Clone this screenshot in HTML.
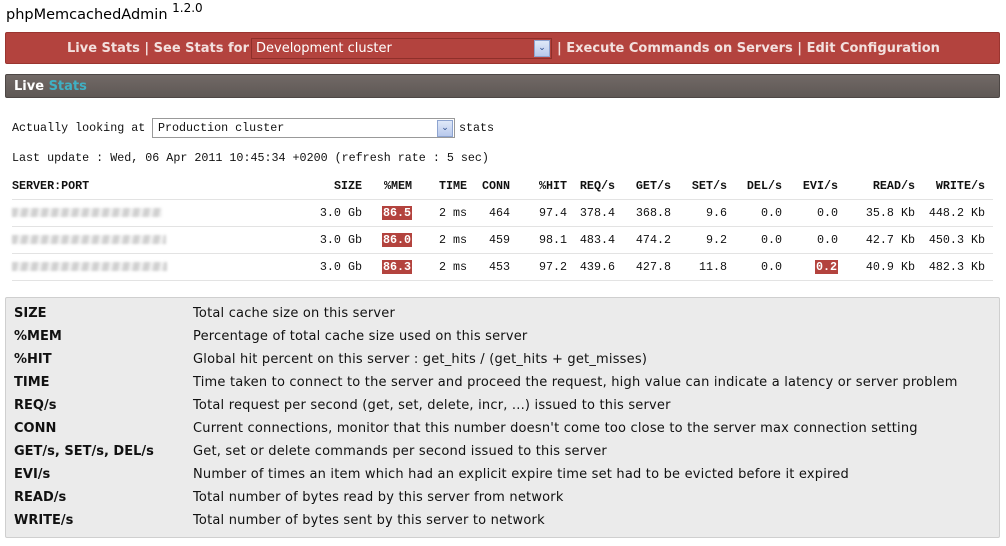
<!DOCTYPE html>
<html><head><meta charset="utf-8"><style>
body{margin:0;background:#fff;width:1006px;height:546px;position:relative;overflow:hidden;font-family:"DejaVu Sans","Liberation Sans",sans-serif;}
.abs{position:absolute;white-space:nowrap}
.title{left:6px;top:7px;font-size:14.5px;color:#000}
.title sup{font-size:12px;position:relative;top:-6px;vertical-align:top}
.nav{left:5px;top:32px;width:993px;height:30px;background:#b3433e;border:1px solid #9a3530;border-radius:2px}
.nav .t{position:absolute;top:8px;font-size:13px;font-weight:bold;color:#f3e0de}
.sel{position:absolute;border:1px solid #8e2f2a;background:#b3433e;color:#fff;font-size:13px}
.dd{position:absolute;right:1px;top:1px;width:16px;height:17px;background:linear-gradient(#dfe8f8,#b8c9ec);border:1px solid #8ea4d0;box-sizing:border-box;color:#2a4a8a;font-size:9px;text-align:center;line-height:15px}
.bar{left:5px;top:74px;width:993px;height:22px;background:linear-gradient(#716966,#5f5855);border:1px solid #4d4745;border-radius:2px}
.bar span{position:absolute;left:8px;top:4px;font-size:13px;font-weight:bold;color:#fff}
.mono{font-family:"Liberation Mono","DejaVu Sans Mono",monospace;font-size:11.7px;color:#111}
.hdr{font-weight:bold}
.line{position:absolute;left:12px;width:981px;height:1px;background:#e3e3e3}
.blur{position:absolute;left:12px;height:9px;width:152px;background:repeating-linear-gradient(100deg,#ccc 0 6px,#eee 6px 10px);filter:blur(1.2px);opacity:.9}
.red{background:#b3433e;color:#fff;font-weight:bold;padding:0 1px}
.leg{left:5px;top:297px;width:993px;height:239px;background:#ebebeb;border:1px solid #cfcfcf;border-radius:2px}
.leg div{position:absolute;font-size:13px;letter-spacing:0.2px;color:#111;white-space:nowrap}
.leg b{position:absolute;left:8px;letter-spacing:0}
.leg i{font-style:normal;position:absolute;left:187px}
</style></head><body>
<div class="abs title">phpMemcachedAdmin <sup>1.2.0</sup></div>
<div class="abs nav">
 <span class="t" style="left:61px">Live Stats | See Stats for</span>
 <div class="sel" style="left:245px;top:5px;width:299px;height:19px"><span style="position:absolute;left:4px;top:2px;color:#fff">Development cluster</span><div class="dd">&#8964;</div></div>
 <span class="t" style="left:551px">| Execute Commands on Servers | Edit Configuration</span>
</div>
<div class="abs bar"><span>Live <span style="position:static;color:#3fb0c4">Stats</span></span></div>

<div class="abs mono" style="left:12px;top:121px">Actually looking at</div>
<div class="abs" style="left:152px;top:118px;width:301px;height:18px;border:1px solid #999;background:#fff"><span class="mono" style="position:absolute;left:5px;top:2px">Production cluster</span><div class="dd">&#8964;</div></div>
<div class="abs mono" style="left:459px;top:121px">stats</div>
<div class="abs mono" style="left:12px;top:151px">Last update : Wed, 06 Apr 2011 10:45:34 +0200 (refresh rate : 5 sec)</div>

<div class="abs mono hdr" style="left:12px;top:179px">SERVER:PORT</div>
<div class="line" style="top:199px"></div><div class="line" style="top:226px"></div><div class="line" style="top:253px"></div><div class="line" style="top:280px"></div>
<div class="blur" style="top:208px;width:150px"></div>
<div class="blur" style="top:235px;width:154px"></div>
<div class="blur" style="top:262px;width:155px"></div>
<div id="cols"></div>
<script>
var rights=[362,412,467,510,567,615,671,727,782,838,915,985];
var rows=[
["SIZE","%MEM","TIME","CONN","%HIT","REQ/s","GET/s","SET/s","DEL/s","EVI/s","READ/s","WRITE/s"],
["3.0 Gb","*86.5","2 ms","464","97.4","378.4","368.8","9.6","0.0","0.0","35.8 Kb","448.2 Kb"],
["3.0 Gb","*86.0","2 ms","459","98.1","483.4","474.2","9.2","0.0","0.0","42.7 Kb","450.3 Kb"],
["3.0 Gb","*86.3","2 ms","453","97.2","439.6","427.8","11.8","0.0","*0.2","40.9 Kb","482.3 Kb"]];
var tops=[179,206,233,260],h="";
rows.forEach(function(r,i){r.forEach(function(c,j){
 var red=c[0]=="*";if(red)c=c.slice(1);
 h+='<div class="abs mono'+(i==0?' hdr':'')+'" style="right:'+(1006-rights[j])+'px;top:'+tops[i]+'px">'+(red?'<span class="red">'+c+'</span>':c)+'</div>';
});});
document.getElementById('cols').innerHTML=h;
</script>

<div class="abs leg">
<div style="top:8px"><b>SIZE</b><i>Total cache size on this server</i></div>
<div style="top:31px"><b>%MEM</b><i>Percentage of total cache size used on this server</i></div>
<div style="top:54px"><b>%HIT</b><i>Global hit percent on this server : get_hits / (get_hits + get_misses)</i></div>
<div style="top:77px"><b>TIME</b><i>Time taken to connect to the server and proceed the request, high value can indicate a latency or server problem</i></div>
<div style="top:100px"><b>REQ/s</b><i>Total request per second (get, set, delete, incr, ...) issued to this server</i></div>
<div style="top:123px"><b>CONN</b><i>Current connections, monitor that this number doesn't come too close to the server max connection setting</i></div>
<div style="top:146px"><b>GET/s, SET/s, DEL/s</b><i>Get, set or delete commands per second issued to this server</i></div>
<div style="top:169px"><b>EVI/s</b><i>Number of times an item which had an explicit expire time set had to be evicted before it expired</i></div>
<div style="top:192px"><b>READ/s</b><i>Total number of bytes read by this server from network</i></div>
<div style="top:215px"><b>WRITE/s</b><i>Total number of bytes sent by this server to network</i></div>
</div>
</body></html>
